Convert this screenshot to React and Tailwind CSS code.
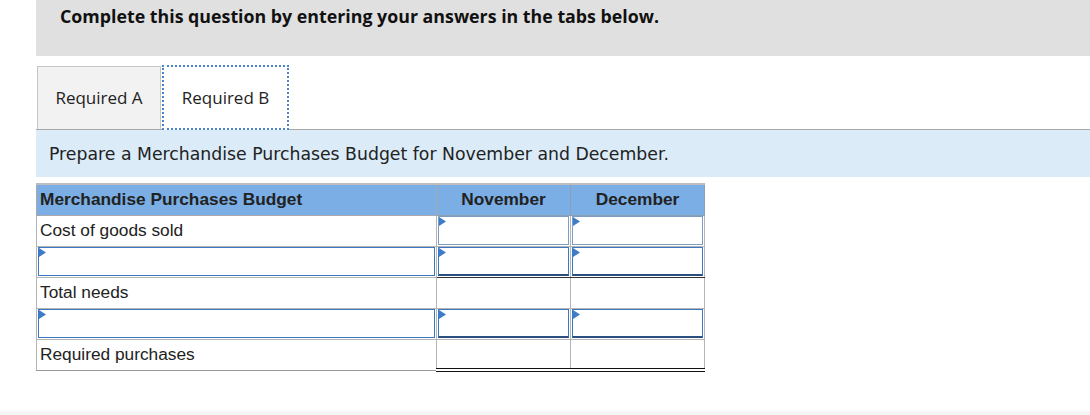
import React from "react";

function Tri() {
  return (
    <svg className="absolute left-0 top-0" width="7" height="9" viewBox="0 0 7 9">
      <polygon points="0,0 7,4.5 0,9" fill="#3f7cc8" />
    </svg>
  );
}

function InputBox({ strong, bottomDark }) {
  return (
    <div
      className={
        "relative h-[29px] mx-[1px] border " +
        (strong ? "border-[#3b78c4] " : "border-[#7d9cc4] ") +
        (bottomDark ? "border-b-[2px] border-b-[#2a4f80]" : "")
      }
    >
      <Tri />
    </div>
  );
}

export default function App() {
  const sans = { fontFamily: '"Liberation Sans", Arial, sans-serif' };
  return (
    <div className="w-[1090px] h-[415px] bg-white flex flex-col overflow-hidden">
      <div className="flex-1 pl-[36px]">
        <div
          className="h-[56px] bg-[#e0e0e0] pl-[24px] pt-[3px] text-[17.8px] leading-[26px] font-bold text-[#111]"
          style={{ fontFamily: '"Open Sans", sans-serif' }}
        >
          Complete this question by entering your answers in the tabs below.
        </div>
        <div
          className="mt-[10px] h-[64px] flex items-end border-b border-[#a8a8a8] pl-[1px]"
          style={{ fontFamily: '"Open Sans", sans-serif' }}
        >
          <div className="w-[124px] h-[63px] bg-[#f2f2f2] border border-b-0 border-[#c6c6c6] flex items-center justify-center text-[17px] text-[#222]">
            Required A
          </div>
          <div className="ml-[1px] w-[127px] h-[65px] bg-white border-2 border-dotted border-[#4a84cc] flex items-center justify-center text-[17px] text-[#222] relative top-[1px]">
            Required B
          </div>
        </div>
        <div
          className="h-[47px] bg-[#dbebf8] pl-[13px] pt-[2px] flex items-center text-[17.3px] text-[#222]"
          style={{ fontFamily: '"DejaVu Sans", Verdana, sans-serif' }}
        >
          Prepare a Merchandise Purchases Budget for November and December.
        </div>
        <table
          className="mt-[6px] border-collapse text-[17.3px] text-[#222] table-fixed"
          style={sans}
        >
          <colgroup>
            <col className="w-[400px]" />
            <col className="w-[134px]" />
            <col className="w-[134px]" />
          </colgroup>
          <thead>
            <tr className="h-[31px] bg-[#7aaee4]">
              <th className="border border-[#a9a9a9] border-t-2 border-t-[#bdbdbd] text-left font-bold pl-[3px]">
                Merchandise Purchases Budget
              </th>
              <th className="border border-[#8c9fb5] border-t-2 border-t-[#bdbdbd] font-bold text-center">
                November
              </th>
              <th className="border border-[#8c9fb5] border-t-2 border-t-[#bdbdbd] font-bold text-center">
                December
              </th>
            </tr>
          </thead>
          <tbody>
            <tr className="h-[31px]">
              <td className="border border-[#b5b5b5] pl-[3px]">Cost of goods sold</td>
              <td className="border border-[#b5b5b5] p-0">
                <InputBox />
              </td>
              <td className="border border-[#b5b5b5] p-0">
                <InputBox />
              </td>
            </tr>
            <tr className="h-[31px]">
              <td className="border border-[#b5b5b5] p-0">
                <InputBox strong />
              </td>
              <td className="border border-[#b5b5b5] border-b-[#333] p-0">
                <InputBox strong bottomDark />
              </td>
              <td className="border border-[#b5b5b5] border-b-[#333] p-0">
                <InputBox strong bottomDark />
              </td>
            </tr>
            <tr className="h-[31px]">
              <td className="border border-[#b5b5b5] pl-[3px]">Total needs</td>
              <td className="border border-[#b5b5b5]"></td>
              <td className="border border-[#b5b5b5]"></td>
            </tr>
            <tr className="h-[31px]">
              <td className="border border-[#b5b5b5] p-0">
                <InputBox strong />
              </td>
              <td className="border border-[#b5b5b5] border-b-[#333] p-0">
                <InputBox strong bottomDark />
              </td>
              <td className="border border-[#b5b5b5] border-b-[#333] p-0">
                <InputBox strong bottomDark />
              </td>
            </tr>
            <tr className="h-[31px]">
              <td className="border border-[#b5b5b5] border-b-[#9a9a9a] pl-[3px]">Required purchases</td>
              <td className="border border-[#b5b5b5] border-b-[4px] border-b-[#111] border-double"></td>
              <td className="border border-[#b5b5b5] border-b-[4px] border-b-[#111] border-double"></td>
            </tr>
          </tbody>
        </table>
      </div>
      <div className="h-[4px] bg-[#f6f6f6]" />
    </div>
  );
}
